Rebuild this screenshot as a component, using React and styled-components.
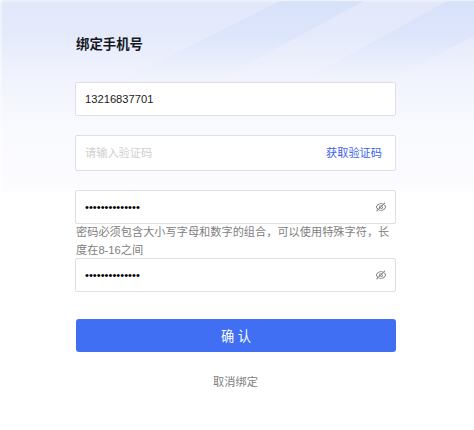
import { useState } from 'react';
import styled, { createGlobalStyle } from 'styled-components';
import { AiOutlineEye, AiOutlineEyeInvisible } from 'react-icons/ai';

// bind phone page: phone number, sms code, and the new password twice

function PasswordField({ value, onChange }) {
  const [visible, setVisible] = useState(false);

  return (
    <Field>
      <Input type={visible ? 'text' : 'password'} value={value} onChange={(e) => { onChange(e.target.value); }} />
      <EyeButton type="button" onClick={() => { setVisible(!visible); }}>
        {visible ? <AiOutlineEye size={12} /> : <AiOutlineEyeInvisible size={12} />}
      </EyeButton>
    </Field>
  );
}

function App() {
  const [phone, setPhone] = useState('13216837701');
  const [code, setCode] = useState('');
  const [password, setPassword] = useState('Abcdef12345678');
  const [confirm, setConfirm] = useState('Abcdef12345678');

  return (
    <Page>
      <GlobalStyle />
      <Backdrop viewBox="0 0 474 190" preserveAspectRatio="none">
        <defs>
          <linearGradient id="stripeFade" gradientUnits="userSpaceOnUse" x1="0" y1="0" x2="0" y2="80">
            <stop offset="0" stopColor="#ccdbf8" stopOpacity="0.5" />
            <stop offset="0.45" stopColor="#d2dffa" stopOpacity="0.45" />
            <stop offset="1" stopColor="#e4ecff" stopOpacity="0" />
          </linearGradient>
        </defs>
        <path d="M280 0 L364 0 L216 80 L120 80 Z" fill="url(#stripeFade)" />
        <path d="M447 0 L474 0 L474 35 L386 80 L302 80 Z" fill="url(#stripeFade)" />
      </Backdrop>

      <Form onSubmit={(e) => { e.preventDefault(); }}>
        <Title>绑定手机号</Title>

        <Field $gap={19}>
          <Input value={phone} onChange={(e) => { setPhone(e.target.value); }} />
        </Field>

        <Field $height={36} $gap={19}>
          <Input placeholder="请输入验证码" value={code} onChange={(e) => { setCode(e.target.value); }} />
          <CodeButton type="button">获取验证码</CodeButton>
        </Field>

        <PasswordField value={password} onChange={setPassword} />
        <Hint>密码必须包含大小写字母和数字的组合，可以使用特殊字符，长度在8-16之间</Hint>
        <PasswordField value={confirm} onChange={setConfirm} />

        <SubmitButton type="submit">确 认</SubmitButton>
        <CancelButton type="button">取消绑定</CancelButton>
      </Form>
    </Page>
  );
}

export default App;


const GlobalStyle = createGlobalStyle`
* {
  box-sizing: border-box;
}
body {
  margin: 0;
  background-color: #fff;
}
body, input, button {
  font-family: "Liberation Sans", "Noto Sans CJK SC", sans-serif;
  font-size: 11.2px;
}
`;

const Page = styled.main`
position: relative;
min-height: 430px;
overflow: hidden;
background:
  linear-gradient(90deg, rgba(255, 255, 255, 0.6) 0px, rgba(255, 255, 255, 0) 3px),
  linear-gradient(#f0f3fd 0px, #e2e8fa 3px, #e5eafb 35px, #f0f3fd 75px, #f8f9fe 120px, #fcfcff 191px, #fff 192px);
`;

const Backdrop = styled.svg`
position: absolute;
top: 1px;
left: 0;
width: 100%;
height: 190px;
`;

const Form = styled.form`
position: relative;
display: flex;
flex-direction: column;
width: 321px;
margin: 0 auto 0 75px;
padding-top: 35px;
`;

const Title = styled.h1`
height: 20px;
margin: 0 0 27px;
padding-left: 1px;
font-size: 13.4px;
font-weight: 700;
line-height: 20px;
color: #15171f;
`;

const Field = styled.div`
display: flex;
align-items: center;
height: ${(props) => props.$height || 34}px;
margin-bottom: ${(props) => props.$gap || 0}px;
padding: 0 9px;
border: 1px solid #dedfe4;
border-radius: 2px;
background-color: #fff;
`;

const Input = styled.input`
flex: 1;
min-width: 0;
padding: 0;
border: none;
outline: none;
background: transparent;
color: #1b1b1b;

&[type='password'] {
  color: #000;
}

&::placeholder {
  color: #cfcfcf;
}
`;

const CodeButton = styled.button`
margin-right: 4px;
padding: 0 0 2px;
border: none;
background: none;
color: #3c5fee;
`;

const EyeButton = styled.button`
display: flex;
margin-right: -1px;
padding: 0;
border: none;
background: none;
color: #777;
`;

const Hint = styled.p`
height: 34px;
margin: 0;
padding-left: 1px;
font-size: 11.2px;
line-height: 17.5px;
color: #808080;
`;

const SubmitButton = styled.button`
height: 33px;
margin: 27px 0 0 1px;
padding-bottom: 2px;
border: none;
border-radius: 3px;
background-color: #406ff3;
color: #fff;
font-size: 13.2px;
`;

const CancelButton = styled.button`
align-self: center;
margin-top: 21px;
padding: 0;
border: none;
background: none;
color: #808080;
`;
